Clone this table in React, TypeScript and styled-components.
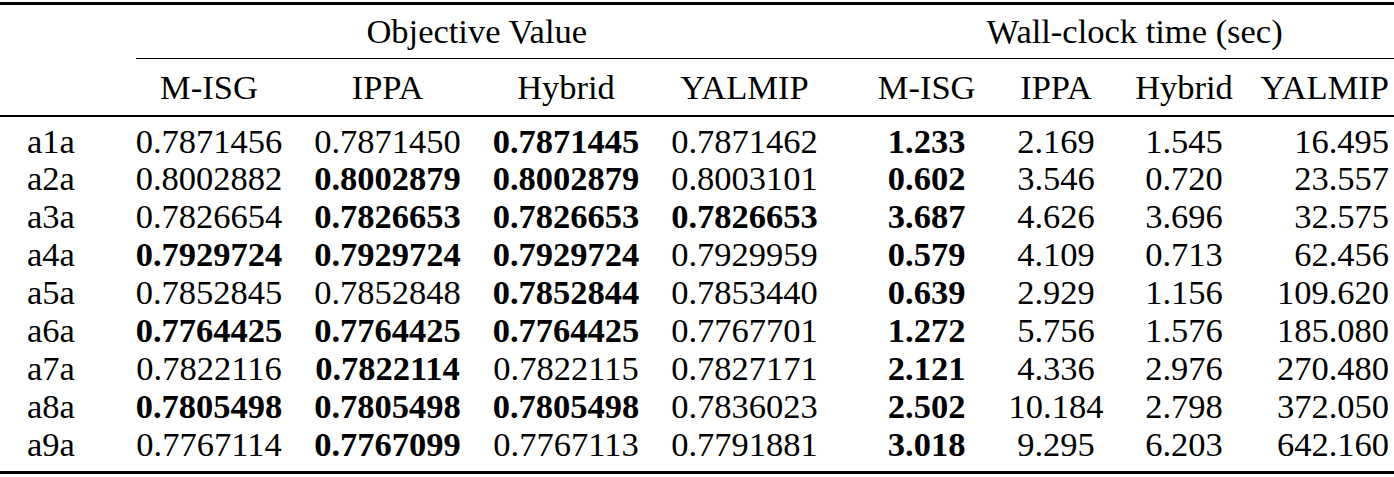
import styled, { createGlobalStyle } from 'styled-components';

const COLS = '119.75px repeat(4, 178.5px) 159.25px 126px 130px 160px';

const GlobalStyle = createGlobalStyle`
	html, body {
		margin: 0;
		padding: 0;
		background: #fff;
		overflow: hidden;
	}
`;

type Row = { name: string; obj: [string, boolean][]; time: [string, boolean][] };

const rows: Row[] = [
	{ name: 'a1a', obj: [['0.7871456', false], ['0.7871450', false], ['0.7871445', true], ['0.7871462', false]], time: [['1.233', true], ['2.169', false], ['1.545', false], ['16.495', false]] },
	{ name: 'a2a', obj: [['0.8002882', false], ['0.8002879', true], ['0.8002879', true], ['0.8003101', false]], time: [['0.602', true], ['3.546', false], ['0.720', false], ['23.557', false]] },
	{ name: 'a3a', obj: [['0.7826654', false], ['0.7826653', true], ['0.7826653', true], ['0.7826653', true]], time: [['3.687', true], ['4.626', false], ['3.696', false], ['32.575', false]] },
	{ name: 'a4a', obj: [['0.7929724', true], ['0.7929724', true], ['0.7929724', true], ['0.7929959', false]], time: [['0.579', true], ['4.109', false], ['0.713', false], ['62.456', false]] },
	{ name: 'a5a', obj: [['0.7852845', false], ['0.7852848', false], ['0.7852844', true], ['0.7853440', false]], time: [['0.639', true], ['2.929', false], ['1.156', false], ['109.620', false]] },
	{ name: 'a6a', obj: [['0.7764425', true], ['0.7764425', true], ['0.7764425', true], ['0.7767701', false]], time: [['1.272', true], ['5.756', false], ['1.576', false], ['185.080', false]] },
	{ name: 'a7a', obj: [['0.7822116', false], ['0.7822114', true], ['0.7822115', false], ['0.7827171', false]], time: [['2.121', true], ['4.336', false], ['2.976', false], ['270.480', false]] },
	{ name: 'a8a', obj: [['0.7805498', true], ['0.7805498', true], ['0.7805498', true], ['0.7836023', false]], time: [['2.502', true], ['10.184', false], ['2.798', false], ['372.050', false]] },
	{ name: 'a9a', obj: [['0.7767114', false], ['0.7767099', true], ['0.7767113', false], ['0.7791881', false]], time: [['3.018', true], ['9.295', false], ['6.203', false], ['642.160', false]] },
];

const methods = ['M-ISG', 'IPPA', 'Hybrid', 'YALMIP'];

const App = () => {
	return (
		<>
			<GlobalStyle />
			<Table>
				<Rule $h={3} />
				<GridRow $h={53}>
					<Cell />
					<GroupCell $from={2} $to={6}>Objective Value</GroupCell>
					<GroupCell $from={6} $to={10} $padLeft={26.5}>
						Wall-clock time (sec)
					</GroupCell>
				</GridRow>
				<GridRow $h={1}>
					<CMidRule />
				</GridRow>
				<GridRow $h={56}>
					<Cell />
					{methods.map((m) => (
						<Cell key={'o' + m}>{m}</Cell>
					))}
					{methods.map((m, i) => (
						<Cell key={'t' + m} $padLeft={i === 0 ? 26.5 : 0} $right={i === 3}>
							{m}
						</Cell>
					))}
				</GridRow>
				<Rule $h={2} />
				<Body>
					{rows.map((r) => (
						<GridRow key={r.name} $h={37.9}>
							<Label>{r.name}</Label>
							{r.obj.map(([v, b], i) => (
								<Cell key={i} $bold={b}>
									{v}
								</Cell>
							))}
							{r.time.map(([v, b], i) => (
								<Cell key={'t' + i} $bold={b} $padLeft={i === 0 ? 26.5 : 0} $right={i === 3}>
									{v}
								</Cell>
							))}
						</GridRow>
					))}
				</Body>
				<Rule $h={3} />
			</Table>
		</>
	);
};

export default App;

const Table = styled.div`
	width: 1409px;
	margin-top: 2px;
	display: flex;
	flex-direction: column;
	font-family: 'Liberation Serif', 'Times New Roman', serif;
	font-size: 34.5px;
	color: #000;
`;

const Rule = styled.div<{ $h: number }>`
	height: ${(p) => p.$h}px;
	background: #000;
`;

const GridRow = styled.div<{ $h: number }>`
	display: grid;
	grid-template-columns: ${COLS};
	height: ${(p) => p.$h}px;
	line-height: ${(p) => p.$h}px;
`;

const Cell = styled.div<{ $bold?: boolean; $right?: boolean; $padLeft?: number }>`
	text-align: ${(p) => (p.$right ? 'right' : 'center')};
	font-weight: ${(p) => (p.$bold ? 700 : 400)};
	padding-left: ${(p) => p.$padLeft ?? 0}px;
	padding-right: ${(p) => (p.$right ? 20 : 0)}px;
	white-space: nowrap;
`;

const GroupCell = styled.div<{ $from: number; $to: number; $padLeft?: number }>`
	grid-column: ${(p) => p.$from} / ${(p) => p.$to};
	text-align: center;
	padding-left: ${(p) => p.$padLeft ?? 0}px;
	white-space: nowrap;
`;

const Label = styled.div`
	padding-left: 27px;
	white-space: nowrap;
`;

const CMidRule = styled.div`
	grid-column: 2 / -1;
	margin-left: 16.25px;
	background: #000;
`;

const Body = styled.div`
	padding: 5.55px 0 7.35px;
`;
